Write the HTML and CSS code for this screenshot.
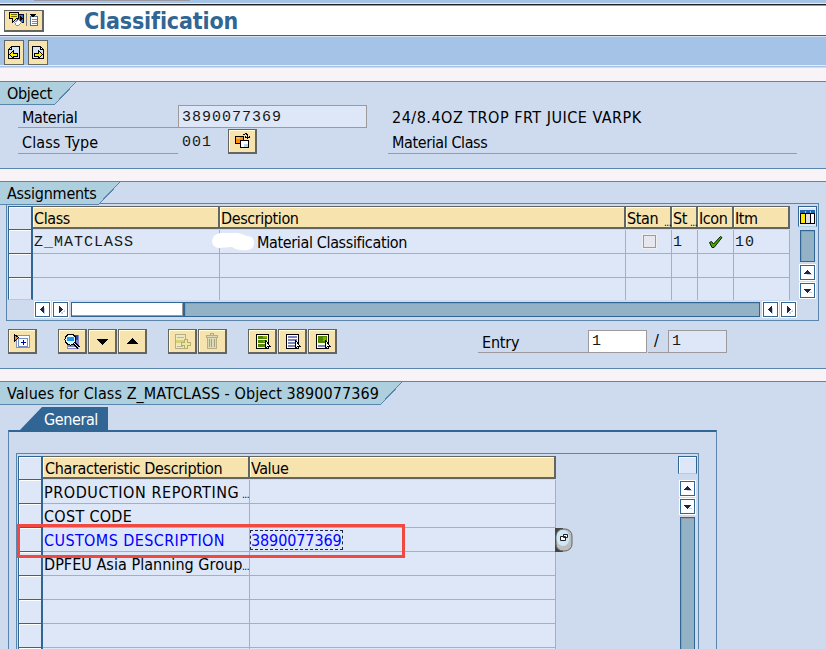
FILE: index.html
```
<!DOCTYPE html>
<html lang="en">

<head>
    <meta charset="UTF-8">
    <meta name="viewport" content="width=device-width, initial-scale=1.0">
    <title>Classification</title>
    <link rel="stylesheet" href="styles.css">
</head>

<body>
    <svg class="defs">
        <symbol id="up" viewBox="0 0 13 13"><path d="M6 8h5v1H6z" fill="#c6cfe7" /><path d="M6 4h1v1h1v1h1v1h1v1H3V7h1V6h1V5h1z" fill="#212442" /></symbol>
        <symbol id="down" viewBox="0 0 13 13"><path d="M8 8h3v1H8z" fill="#c6cfe7" /><path d="M3 5h7v1H9v1H8v1H7v1H6V8H5V7H4V6H3z" fill="#212442" /></symbol>
        <symbol id="left" viewBox="0 0 13 13"><path d="M8 5h1v6H8z" fill="#c6cfe7" /><path d="M8 3v7H7V9H6V8H5V7H4V6h1V5h1V4h1V3z" fill="#212442" /></symbol>
        <symbol id="right" viewBox="0 0 13 13"><path d="M7 9h2V8h1V7h1v2H9v2H7z" fill="#c6cfe7" /><path d="M5 3h1v1h1v1h1v1h1v1H8v1H7v1H6v1H5z" fill="#212442" /></symbol>
    </svg>

    <div class="top-strip"></div>
    <header class="title-bar">
        <div class="menu-button">
            <svg width="36" height="17" viewBox="0 0 36 17">
                <path d="M12.500 3.500h6v8h-6z" fill="#297dde" stroke="#001039" />
                <path d="M15 5v5h1V9h1V8h1V7h-1V6h-1V5z" fill="#000" />
                <path d="M4.500 1.500h9v6h-2l-4 4v-4h-3z" fill="#ffef00" stroke="#000" />
                <path d="M6 3.500h6M6 5.500h6" stroke="#736d00" />
                <path d="M9.500 11.500l4-3 3 3-3 3h-2z" fill="#fff" stroke="#7b8ec6" />
                <path d="M21.500 2v13" stroke="#7b7d7b" />
                <path d="M25.500 5.500h7v9h-7z" fill="#fff" stroke="#526d94" />
                <path d="M27 8.500h5M27 10.500h5M27 12.500h5" stroke="#6b8abd" />
                <path d="M25 3h6v1h-1v1h-1v1h-2V5h-1V4h-1z" fill="#000" />
            </svg>
        </div>
        <h1>Classification</h1>
    </header>
    <nav class="toolbar">
        <div class="page-button">
            <svg width="14" height="16" viewBox="0 0 14 16">
                <path d="M4.500 1.500h8v12h-11v-9h3z" fill="#d6e3f7" stroke="#000" />
                <path d="M1.500 4.500l3-3v3z" fill="#fff" stroke="#000" />
                <path d="M2.500 9.500l4-4v2.500h4v3h-4v2.500z" fill="#ffef00" stroke="#000" />
            </svg>
        </div>
        <div class="page-button">
            <svg width="14" height="16" viewBox="0 0 14 16">
                <path d="M1.500 1.500h8l3 3v9h-11z" fill="#d6e3f7" stroke="#000" />
                <path d="M9.500 1.500v3h3z" fill="#fff" stroke="#000" />
                <path d="M11.500 9.500l-4-4v2.500h-4v3h4v2.500z" fill="#ffef00" stroke="#000" />
            </svg>
        </div>
    </nav>

    <section class="panel object">
        <div class="tab"><span class="tab-text w-object">Object</span><svg width="23" height="24"><path d="M0 0h22L0 23z" fill="#adcfde" /><path d="M22 0L0 23" stroke="#5a86ad" /></svg></div>
        <div class="form-row">
            <label class="w-mat">Material</label>
            <span class="field mono material">3890077369</span>
            <span class="info w-juice">24/8.4OZ TROP FRT JUICE VARPK</span>
        </div>
        <div class="form-row">
            <label class="w-type">Class Type</label>
            <span class="mono type">001</span>
            <div class="btn">
                <svg width="18" height="18" viewBox="0 0 18 18">
                    <path d="M2.500 4.500h8v7h-8z" fill="#ff8e00" stroke="#000" />
                    <path d="M3 5h4v2H3z" fill="#ffb64a" />
                    <path d="M7.500 8.500h8v7h-8z" fill="#fff" stroke="#000" />
                    <path d="M11 12h4v3h-4z" fill="#bdd7ef" />
                    <path d="M10.500 3l2-1.500 2 1v3M12 4.500l2.500 2 2.500-2" fill="none" stroke="#000" />
                </svg>
            </div>
            <span class="info line w-matclass">Material Class</span>
        </div>
    </section>

    <section class="panel assignments">
        <div class="tab"><span class="tab-text w-assign">Assignments</span><svg width="23" height="24"><path d="M0 0h22L0 23z" fill="#adcfde" /><path d="M22 0L0 23" stroke="#5a86ad" /></svg></div>
        <div class="table-box">
            <div class="table-main">
                <div class="grid classes">
                    <div class="sel first"></div>
                    <div class="head"><span>Class</span></div>
                    <div class="head"><span>Description</span></div>
                    <div class="head">Stan<i>...</i></div>
                    <div class="head">St<i>...</i></div>
                    <div class="head">Icon</div>
                    <div class="head">Itm</div>

                    <div class="sel"></div>
                    <div class="cell mono">Z_MATCLASS</div>
                    <div class="cell desc"><svg class="blot" width="44" height="20"><path d="M9 1H27Q32 2 36 4Q43 4 43 11Q43 18 36 18Q27 19 21 15L8 16Q1 15 1 9Q2 2 9 1z" fill="#fff" /></svg><span class="w-classif">Material Classification</span></div>
                    <div class="cell center"><b class="check"></b></div>
                    <div class="cell mono">1</div>
                    <div class="cell center">
                        <svg class="tick" width="16" height="14" viewBox="0 0 16 14"><path d="M1.500 7.500l2-1 2 2.500 7-7.500 1.500 1-8 10h-2z" fill="#52a600" stroke="#001800" /></svg>
                    </div>
                    <div class="cell mono">10</div>

                    <div class="sel"></div>
                    <div class="cell"></div><div class="cell"></div><div class="cell"></div><div class="cell"></div><div class="cell"></div><div class="cell"></div>
                    <div class="sel last"></div>
                    <div class="cell last"></div><div class="cell last"></div><div class="cell last"></div><div class="cell last"></div><div class="cell last"></div><div class="cell last"></div>
                </div>
                <div class="hscroll">
                    <div class="arrow"><svg><use href="#left" /></svg></div>
                    <div class="arrow"><svg><use href="#right" /></svg></div>
                    <div class="thumb"></div>
                    <div class="track"></div>
                    <div class="arrow"><svg><use href="#left" /></svg></div>
                    <div class="arrow"><svg><use href="#right" /></svg></div>
                </div>
            </div>
            <div class="vscroll">
                <div class="config">
                    <svg width="15" height="14" viewBox="0 0 15 14">
                        <path d="M0 0h15v14H0z" fill="#000" /><path d="M0 0h15v3H0z" fill="#2165ad" />
                        <path d="M1 4h4v9H1z" fill="#ffe700" /><path d="M6 4h4v9H6z" fill="#dedfe7" /><path d="M11 4h3v9h-3z" fill="#fff" />
                        <path d="M5 1h1v2H5zM10 1h1v2h-1z" fill="#9cc3e7" />
                    </svg>
                </div>
                <div class="track"></div>
                <div class="arrow"><svg><use href="#up" /></svg></div>
                <div class="arrow"><svg><use href="#down" /></svg></div>
            </div>
        </div>

        <div class="actions">
            <div class="btn gap">
                <svg width="18" height="18" viewBox="0 0 18 18">
                    <path d="M3.500 3.500h13v12h-13z" fill="#fff" stroke="#8492b5" />
                    <path d="M5.500 6.500h9v8h-9z" fill="#fff" stroke="#738ec6" />
                    <path d="M10.500 8v5M8 10.500h5" stroke="#0000a5" />
                    <path d="M1.500 2.500v7l4-4z" fill="#ff8e00" stroke="#000" />
                </svg>
            </div>
            <div class="btn">
                <svg width="18" height="18" viewBox="0 0 18 18">
                    <path d="M4 3h12v14H4z" fill="#8486c6" /><path d="M10 3h5v5h-5z" fill="#2149a5" /><path d="M5 12.500h7M5 15.500h8" stroke="#fff" />
                    <circle cx="7.500" cy="7.500" r="5.500" fill="#dff" stroke="#000" />
                    <path d="M4 5h7v4H4z" fill="#2196ef" /><path d="M11 11l5 5" stroke="#000" stroke-width="3" /><path d="M11 11l5 5" stroke="#dee" />
                </svg>
            </div>
            <div class="btn"><svg width="18" height="18" viewBox="0 0 18 18"><path d="M4 7h11v1h-1v1h-1v1h-1v1h-1v1h-1v1H9v-1H8v-1H7v-1H6V9H5V8H4z" /></svg></div>
            <div class="btn gap"><svg width="18" height="18" viewBox="0 0 18 18"><path d="M9 6h1v1h1v1h1v1h1v1h1v1h1v1H4v-1h1v-1h1V9h1V8h1V7h1z" /></svg></div>
            <div class="btn">
                <svg width="18" height="18" viewBox="0 0 18 18">
                    <path d="M2.500 2.500h10v14h-10z" fill="#efe7bd" stroke="#b5ae84" />
                    <path d="M4 5.500h7M4 14.500h6" stroke="#bdb694" /><path d="M3 8h9v3H3z" fill="#d6d273" />
                    <path d="M11.500 7.500h3v3h3v3h-3v3h-3v-3h-3v-3h3z" fill="#efe79c" stroke="#b5ae73" />
                </svg>
            </div>
            <div class="btn gap">
                <svg width="18" height="18" viewBox="0 0 18 18">
                    <path d="M4.500 5.500h9v11h-9zM3.500 3.500h11v2h-11zM7.500 1.500h3v2h-3z" fill="#dedab5" stroke="#b5ae84" />
                    <path d="M6.500 7v8M8.500 7v8M11.500 7v8" stroke="#a5a284" />
                </svg>
            </div>
            <div class="btn">
                <svg width="18" height="18" viewBox="0 0 18 18">
                    <path d="M3.500 2.500h12v14h-12z" fill="#fff" stroke="#000" />
                    <path d="M5 4h9v3H5zM5 8h9v3H5zM5 12h9v3H5z" fill="#528600" /><path d="M10 4h4v2h-4zM10 9h4v1h-4z" fill="#84ae00" />
                    <path d="M12.500 8.500v8l2-2h3z" fill="#fff" stroke="#000" />
                </svg>
            </div>
            <div class="btn">
                <svg width="18" height="18" viewBox="0 0 18 18">
                    <path d="M3.500 2.500h12v14h-12z" fill="#fff" stroke="#000" />
                    <path d="M5 4h9v2H5zM5 7h9v2H5zM5 10h9v2H5zM5 13h9v2H5z" fill="#7b82bd" />
                    <path d="M12.500 8.500v8l2-2h3z" fill="#fff" stroke="#000" />
                </svg>
            </div>
            <div class="btn">
                <svg width="18" height="18" viewBox="0 0 18 18">
                    <path d="M3.500 2.500h12v14h-12z" fill="#fff" stroke="#000" />
                    <path d="M5 4h9v7H5z" fill="#528600" /><path d="M10 5h3v4h-3z" fill="#84ae00" /><path d="M5 13h8v2H5z" fill="#7b82bd" />
                    <path d="M12.500 8.500v8l2-2h3z" fill="#fff" stroke="#000" />
                </svg>
            </div>
            <div class="entry">
                <label class="w-entry">Entry</label>
                <span class="field mono white">1</span>
                <span class="slash">/</span>
                <span class="field mono">1</span>
            </div>
        </div>
    </section>

    <section class="panel values">
        <div class="tab"><span class="tab-text w-values">Values for Class Z_MATCLASS - Object 3890077369</span><svg width="23" height="24"><path d="M0 0h22L0 23z" fill="#adcfde" /><path d="M22 0L0 23" stroke="#5a86ad" /></svg></div>
        <div class="page-tab">General</div>
        <div class="tab-page">
            <div class="values-box">
                <div class="grid chars">
                    <div class="sel first"></div>
                    <div class="head"><span class="w-char">Characteristic Description</span></div>
                    <div class="head">Value</div>
                    <div class="sel"></div><div class="cell"><span class="w-prod">PRODUCTION REPORTING</span><i>...</i></div><div class="cell"></div>
                    <div class="sel"></div><div class="cell"><span class="w-cost">COST CODE</span></div><div class="cell"></div>
                    <div class="sel"></div><div class="cell blue"><span class="w-customs">CUSTOMS DESCRIPTION</span></div><div class="cell blue"><span class="focus">3890077369</span></div>
                    <div class="sel"></div><div class="cell"><span class="w-dpfeu">DPFEU Asia Planning Group</span><i>...</i></div><div class="cell"></div>
                    <div class="sel"></div><div class="cell"></div><div class="cell"></div>
                    <div class="sel"></div><div class="cell"></div><div class="cell"></div>
                    <div class="sel"></div><div class="cell"></div><div class="cell"></div>
                    <div class="sel"></div><div class="cell"></div><div class="cell"></div>
                </div>
                <div class="vscroll">
                    <div class="config"></div>
                    <div class="arrow"><svg><use href="#up" /></svg></div>
                    <div class="arrow"><svg><use href="#down" /></svg></div>
                    <div class="track"></div>
                </div>
                <svg class="help" width="18" height="24" viewBox="0 0 18 24">
                    <path d="M0 0h8v24H0z" fill="#424542" />
                    <rect x="1" y="1" width="16" height="22" rx="7" fill="#bdbebd" stroke="#636563" />
                    <ellipse cx="8" cy="10" rx="6.500" ry="8" fill="#cee7f7" />
                    <path d="M8.500 6.500h4v3h-4zM5.500 8.500h5v4h-5z" fill="#fff" stroke="#212021" />
                </svg>
                <div class="highlight"></div>
            </div>
        </div>
    </section>
</body>

</html>
```
FILE: styles.css
```
* {
    box-sizing: border-box;
}

body {
    margin: 0;
    height: 649px;
    overflow: hidden;
    background-color: #f7f3f7;
    color: #000;
    font-family: "DejaVu Sans Condensed", "DejaVu Sans", sans-serif;
    font-stretch: condensed;
    font-size: 16px;
    letter-spacing: -0.4px;
    line-height: 22px;
    white-space: nowrap;
}

svg {
    display: block;
    flex: none;
    shape-rendering: crispEdges;
}

.tick,
.blot,
.help {
    shape-rendering: auto;
}

.defs {
    width: 0;
    height: 0;
    position: absolute;
}

.top-strip {
    height: 6px;
    background: linear-gradient(#9c9aa5, #9c9aa5) 34px 0 / 156px 1px no-repeat, #a5c3e7;
    border-bottom: 1px solid #9c9a9c;
    box-shadow: inset 0 -1px #212021, inset 0 -2px #e7ebf7;
}

.title-bar {
    display: flex;
    height: 30px;
    padding-left: 4px;
    background-color: #fff;
    border-bottom: 1px solid #316594;
}

.menu-button {
    width: 40px;
    height: 22px;
    margin-top: 4px;
    background-color: #f7e3ad;
    border: 1px solid #636563;
    border-width: 1px 2px 2px 1px;
}

h1 {
    margin: 1px 0 0 40px;
    font-size: 23px;
    line-height: 28px;
    letter-spacing: -0.15px;
    color: #316694;
}

.toolbar {
    display: flex;
    gap: 4px;
    height: 32px;
    padding: 3px 4px 0;
    background-color: #a5c3e7;
    border-top: 1px solid #d6e3f7;
    border-bottom: 1px solid #cedbef;
    box-shadow: inset 0 -1px #a5c3e7, inset 0 -2px #e7ebf7;
}

.page-button {
    display: flex;
    align-items: center;
    justify-content: center;
    width: 20px;
    height: 25px;
    background-color: #f7e3ad;
    border: 1px solid #636563;
}

.panel {
    background-color: #cedbef;
    border-top: 1px solid #5a86ad;
    border-bottom: 1px solid #5a86ad;
}

.object {
    height: 88px;
    margin-top: 13px;
}

.assignments {
    height: 188px;
    margin-top: 12px;
}

.values {
    height: 268px;
    margin-top: 12px;
    border-bottom: none;
}

.tab {
    display: flex;
    height: 23px;
}

.tab-text {
    height: 23px;
    padding: 2px 0 0 7px;
    background-color: #adcfde;
    border-bottom: 1px solid #5a86ad;
    line-height: 20px;
}

/* tracking per caption */
.w-object {
    width: 54px;
    letter-spacing: -0.3px;
}

.w-assign {
    width: 98px;
    letter-spacing: -0.25px;
}

.w-values {
    width: 380px;
    letter-spacing: 0.08px;
}

.w-type {
    letter-spacing: 0.1px;
}

.w-juice {
    letter-spacing: 0.5px;
}

.w-classif,
.w-char {
    letter-spacing: -0.36px;
}

.w-entry {
    letter-spacing: -0.2px;
}

.w-prod {
    letter-spacing: 0.55px;
}

.w-cost {
    letter-spacing: 0.3px;
}

.w-customs {
    letter-spacing: 0.4px;
}

.w-dpfeu {
    letter-spacing: 0.04px;
}

.form-row {
    display: flex;
    padding-left: 18px;
    height: 25px;
    margin-top: -1px;
}

.form-row + .form-row {
    margin-top: 1px;
}

.form-row label {
    width: 160px;
    height: 24px;
    padding: 2px 0 0 4px;
    border-bottom: 1px solid #9c9a9c;
}

.form-row:nth-child(2) label,
.form-row .w-juice {
    padding-top: 3px;
}

.mono {
    font-family: "Liberation Mono", "Courier New", monospace;
    font-size: 15px;
    letter-spacing: 1px;
    color: #181818;
}

.field {
    height: 23px;
    padding-left: 3px;
    background-color: #dee7f7;
    border: 1px solid #9c9a9c;
    line-height: 22px;
}

.material {
    width: 189px;
    margin-top: 1px;
    line-height: 23px;
}

.form-row .info {
    height: 24px;
    padding: 2px 0 0 4px;
    margin-left: 21px;
}

.form-row .type {
    width: 50px;
    padding-left: 4px;
    line-height: 25px;
}

.form-row .w-juice {
    padding-top: 3px;
}

.form-row .line {
    width: 409px;
    margin-left: 131px;
    border-bottom: 1px solid #9c9a9c;
}

.btn {
    display: flex;
    align-items: center;
    justify-content: center;
    flex: none;
    width: 29px;
    height: 25px;
    background-color: #f7e3ad;
    border: 1px solid #636563;
    border-width: 1px 2px 2px 1px;
    box-shadow: inset 1px 1px #ffffd6;
}

.form-row .btn {
    margin-top: -1px;
}

.table-box {
    display: flex;
    width: 813px;
    height: 118px;
    margin: -2px 0 0 6px;
    padding: 2px 0 0 1px;
    border: 1px solid #5a86ad;
}

.table-main {
    width: 789px;
}

.grid {
    display: grid;
    flex: none;
}

.classes {
    grid-template-columns: 25px 187px 406px 46px 26px 36px 56px;
    grid-template-rows: 24px 24px 24px 22px;
    width: 782px;
}

.chars {
    grid-template-columns: 25px 207px 306px;
    grid-template-rows: 24px repeat(8, 24px);
    width: 538px;
}

.sel {
    background-color: #dee7f7;
    border: 1px solid #316594;
    border-width: 0 2px 1px 1px;
    box-shadow: inset 1px 1px #fff;
}

.sel.first {
    border-top-width: 1px;
}

.sel.last {
    border-bottom-color: #adcfde;
}

.head,
.cell {
    position: relative;
    padding-left: 1px;
}

.head {
    height: 23px;
    background-color: #f7e3ad;
    border: 1px solid #636563;
    border-width: 1px 2px 2px 0;
    box-shadow: inset 1px 1px #ffffd6;
    line-height: 24px;
}

.w-char {
    margin-left: 1px;
}

.cell {
    background-color: #dee7f7;
    border: 1px solid #adaead;
    border-width: 0 1px 1px 0;
    line-height: 25px;
}

.cell.mono {
    line-height: 25px;
}

.cell.last {
    border-bottom: none;
}

.cell i,
.head i {
    position: absolute;
    right: 1px;
    bottom: -3px;
    font-size: 10px;
    font-style: normal;
    letter-spacing: -0.5px;
    line-height: 16px;
}

.cell i {
    bottom: 0;
    right: 0;
}

.head i {
    bottom: -4px;
    right: -1px;
}

.cell.center {
    display: flex;
    align-items: center;
    justify-content: center;
}

.desc {
    padding-left: 37px;
}

.blot {
    position: absolute;
    left: -9px;
    top: 2px;
    z-index: 1;
}

.check {
    width: 13px;
    height: 13px;
    background-color: #e7e7ef;
    border: 1px solid #9c9a9c;
    box-shadow: 0 0 0 1px #efefef;
}

.hscroll {
    display: flex;
    align-items: center;
    height: 19px;
    padding-left: 27px;
}

.arrow {
    flex: none;
    width: 15px;
    height: 15px;
    margin-right: 3px;
    background-color: #fff;
    border: 1px solid #316594;
    box-shadow: 0 0 0 1px #fff;
}

.arrow svg {
    width: 13px;
    height: 13px;
}

.thumb {
    width: 113px;
    height: 15px;
    background-color: #fff;
    border: 1px solid #316594;
    box-shadow: inset -1px -1px #9c9a9c;
}

.track {
    background-color: #94b2c6;
    border: 1px solid #316594;
    box-shadow: inset 1px 1px #9c9a9c;
}

.hscroll .track {
    flex: none;
    width: 576px;
    height: 15px;
    margin-right: 3px;
}

.hscroll .thumb {
    flex: none;
}

.vscroll {
    display: flex;
    flex-direction: column;
    align-items: center;
    gap: 3px;
    width: 20px;
    padding-left: 1px;
}

.vscroll .arrow {
    margin: 0;
}

.vscroll .track {
    width: 15px;
    height: 32px;
}

.config {
    display: flex;
    justify-content: center;
    align-items: center;
    width: 19px;
    height: 21px;
    background-color: #dee7f7;
    border: 1px solid #316594;
    border-bottom-color: #adcfde;
    box-shadow: inset 1px 1px #fff;
}

.actions {
    display: flex;
    gap: 1px;
    padding: 8px 0 0 8px;
}

.gap {
    margin-right: 20px;
}

.entry {
    display: flex;
    margin-left: 140px;
}

.entry label {
    width: 110px;
    height: 24px;
    padding: 3px 0 0 4px;
    border-bottom: 1px solid #9c9a9c;
}

.entry .field {
    width: 59px;
    margin-top: 1px;
}

.entry .white {
    background-color: #fff;
}

.slash {
    width: 20px;
    height: 24px;
    margin-left: 1px;
    padding: 1px 0 0 6px;
    border-bottom: 1px solid #9c9a9c;
}

.page-tab {
    width: 89px;
    height: 24px;
    margin: 2px 0 0 19px;
    padding: 2px 0 0 25px;
    background-color: #316594;
    clip-path: polygon(23px 0, 100% 0, 100% 100%, 0 100%);
    color: #fff;
}

.tab-page {
    width: 709px;
    height: 230px;
    margin: -1px 0 0 8px;
    padding: 21px 0 0 7px;
    border: 1px solid #5a86ad;
    border-top: 2px solid #316594;
}

.values-box {
    position: relative;
    display: flex;
    width: 683px;
    height: 210px;
    padding: 2px 0 0 1px;
    border: 1px solid #5a86ad;
}

.values-box .vscroll {
    margin-left: 121px;
}

.values-box .config {
    height: 19px;
    margin-bottom: 4px;
}

.values-box .track {
    height: 150px;
}

.blue {
    color: #00f;
}

.focus {
    display: inline-block;
    height: 20px;
    border: 1px dashed #212442;
    margin-left: -1px;
    line-height: 20px;
    letter-spacing: -0.1px;
}

.help {
    position: absolute;
    left: 538px;
    top: 74px;
}

.highlight {
    position: absolute;
    left: 0;
    top: 70px;
    width: 388px;
    height: 34px;
    border: 3px solid #ef4942;
}
```
